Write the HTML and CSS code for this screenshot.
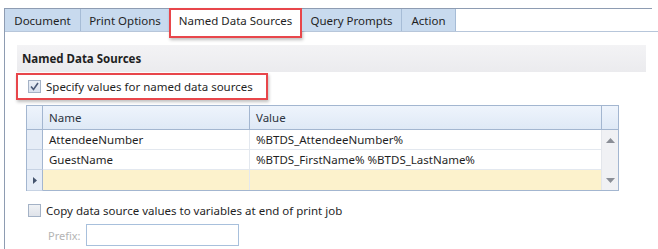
FILE: index.html
```html
<!DOCTYPE html>
<html>
<head>
<meta charset="utf-8">
<link rel="stylesheet" href="styles.css">
</head>
<body>
<div class="frame">
  <div class="tabs">
    <div class="tab w-doc">Document</div>
    <div class="tab w-print">Print Options</div>
    <div class="tab w-named selected">Named Data Sources</div>
    <div class="tab w-query">Query Prompts</div>
    <div class="tab w-action">Action</div>
  </div>
  <div class="page">
    <div class="section-head">Named Data Sources</div>
    <div class="check-row highlight">
      <span class="checkbox checked"><svg width="11" height="11" viewBox="0 0 11 11"><path d="M2 5.5 L4.5 8.5 L9 2" fill="none" stroke="#4a5a78" stroke-width="1.6"/></svg></span>
      <span class="label">Specify values for named data sources</span>
    </div>
    <div class="grid">
      <div class="grow head">
        <div class="rh"></div>
        <div class="c name">Name</div>
        <div class="c value">Value</div>
        <div class="sb"></div>
      </div>
      <div class="gbody">
        <div class="rows">
          <div class="grow">
            <div class="rh"></div>
            <div class="c name">AttendeeNumber</div>
            <div class="c value">%BTDS_AttendeeNumber%</div>
          </div>
          <div class="grow">
            <div class="rh"></div>
            <div class="c name">GuestName</div>
            <div class="c value">%BTDS_FirstName% %BTDS_LastName%</div>
          </div>
          <div class="grow newrow">
            <div class="rh"><svg width="4" height="7" viewBox="0 0 4 7"><path d="M0 0 L4 3.5 L0 7 Z" fill="#44546e"/></svg></div>
            <div class="c name"></div>
            <div class="c value"></div>
          </div>
        </div>
        <div class="scroll">
          <svg width="9" height="5" viewBox="0 0 9 5"><path d="M0 5 L4.5 0 L9 5 Z" fill="#8a8e96"/></svg>
          <svg width="9" height="5" viewBox="0 0 9 5"><path d="M0 0 L4.5 5 L9 0 Z" fill="#8a8e96"/></svg>
        </div>
      </div>
    </div>
    <div class="check-row copy">
      <span class="checkbox"></span>
      <span class="label">Copy data source values to variables at end of print job</span>
    </div>
    <div class="prefix-row">
      <span class="prefix">Prefix:</span>
      <span class="input"></span>
    </div>
  </div>
</div>
</body>
</html>
```
FILE: styles.css
```css
html, body {
  margin: 0;
  padding: 0;
  background: #ffffff;
}
body {
  font-family: "Noto Sans", "Open Sans", sans-serif;
  font-size: 11.5px;
  color: #1f1f1f;
  width: 658px;
  height: 249px;
  overflow: hidden;
}
.frame {
  margin: 8px 0 0 4px;
  width: 648px;
  height: 241px;
  border-left: 1px solid #8e9cb2;
  border-top: 1px solid #8e9cb2;
  box-sizing: border-box;
}
.tabs {
  display: flex;
  height: 22px;
  border-bottom: 1px solid #b7c6da;
  width: 654px;
}
.tab {
  box-sizing: border-box;
  height: 22px;
  background: #c8daee;
  border-right: 1px solid #a6bcd6;
  display: flex;
  align-items: center;
  justify-content: center;
  white-space: nowrap;
  position: relative;
}
.w-doc { width: 76px; }
.w-print { width: 89px; }
.w-named { width: 132px; }
.w-query { width: 100px; }
.w-action { width: 54px; }
.tab.selected {
  background: #ffffff;
  height: 23px;
  margin-bottom: -1px;
}
.tab.selected::after {
  content: "";
  position: absolute;
  left: -1px;
  top: -1px;
  right: -1px;
  bottom: -6px;
  border: 2px solid #e8464b;
  box-shadow: 1px 2px 3px rgba(0,0,0,0.25);
}
.page {
  padding: 13px 0 0 12px;
}
.section-head {
  width: 629px;
  height: 27px;
  box-sizing: border-box;
  background: linear-gradient(#f3f3f5, #ebebee);
  font-weight: bold;
  padding-left: 5px;
  display: flex;
  align-items: center;
}
.check-row {
  display: flex;
  align-items: center;
  gap: 5px;
  position: relative;
}
.check-row.highlight {
  margin: 1px 0 0 -1px;
  height: 27px;
  width: 252px;
  box-sizing: border-box;
  border: 2px solid #e8464b;
  box-shadow: 1px 2px 3px rgba(0,0,0,0.25);
  padding-left: 10px;
}
.checkbox {
  width: 13px;
  height: 13px;
  box-sizing: border-box;
  border: 1px solid #a4b2c6;
  background: linear-gradient(#f0f2f5, #dfe3ea);
  display: flex;
  align-items: center;
  justify-content: center;
  flex: none;
}
.checkbox.checked {
  background: linear-gradient(#e9eef6, #d9e1ee);
}
.grid {
  margin: 5px 0 0 9px;
  width: 593px;
  box-sizing: border-box;
  border: 1px solid #a3b6d0;
}
.grow {
  display: flex;
  height: 20px;
}
.grow.head {
  height: 23px;
  background: linear-gradient(#eef4fc, #dfe9f6);
  border-bottom: 1px solid #a3b6d0;
  color: #2c3440;
}
.rh {
  width: 16px;
  flex: none;
  box-sizing: border-box;
  border-right: 1px solid #a3b6d0;
  background: #e6edf7;
  display: flex;
  align-items: center;
  justify-content: center;
}
.head .rh { background: transparent; }
.rows .grow { border-bottom: 1px solid #e3e8ef; box-sizing: border-box; }
.rows .grow .rh { border-bottom: 1px solid #c7d3e4; margin-bottom: -1px; }
.rows .grow:last-child { border-bottom: none; }
.c {
  display: flex;
  align-items: center;
  padding-left: 6px;
  box-sizing: border-box;
  white-space: nowrap;
}
.c.name {
  width: 207px;
  border-right: 1px solid #e3e8ef;
}
.head .c.name { border-right: 1px solid #a3b6d0; }
.c.value { flex: 1; }
.head .c.value { width: 351px; flex: none; }
.sb {
  flex: 1;
  border-left: 1px solid #a3b6d0;
}
.gbody {
  display: flex;
}
.rows {
  width: 574px;
}
.newrow { background: #fcf2cc; }
.newrow .rh { background: #e6edf7; }
.scroll {
  flex: 1;
  background: #f0f1f4;
  border-left: 1px solid #e3e6eb;
  display: flex;
  flex-direction: column;
  justify-content: space-between;
  align-items: center;
  padding: 8px 0 7px;
}
.check-row.copy {
  margin: 12px 0 0 11px;
  height: 14px;
}
.prefix-row {
  display: flex;
  align-items: center;
  margin: 7px 0 0 31px;
  gap: 5px;
}
.prefix {
  color: #b4b4b4;
  font-size: 11px;
}
.input {
  width: 153px;
  height: 22px;
  box-sizing: border-box;
  border: 1px solid #a8c0dc;
  background: #ffffff;
}
```
